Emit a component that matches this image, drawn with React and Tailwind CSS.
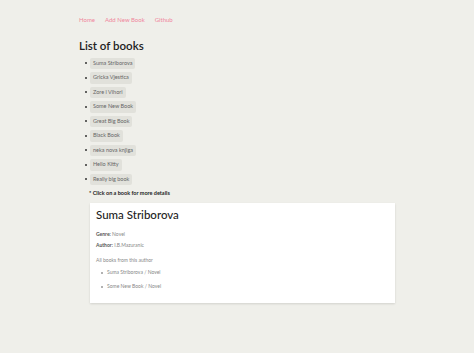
const books = [
  "Suma Striborova",
  "Gricka Vjestica",
  "Zore i Vihori",
  "Some New Book",
  "Great Big Book",
  "Black Book",
  "neka nova knjiga",
  "Hello Kitty",
  "Really big book",
];

const Dot = ({ color }) => (
  <span className={`inline-block w-[2px] h-[2px] rounded-full ${color}`} />
);

const App = () => {
  return (
    <div
      className="min-h-[353px] bg-[#efefea] text-[#333] pl-[79px] pr-[79px]"
      style={{ fontFamily: "Lato, 'Noto Sans', sans-serif" }}
    >
      <nav className="flex gap-[10px] pt-[15px] text-[6px] text-[#f0869c]">
        <a>Home</a>
        <a>Add New Book</a>
        <a>Github</a>
      </nav>

      <h1 className="mt-[15px] text-[11.5px] font-semibold text-[#222] leading-[13px]">
        List of books
      </h1>

      <ul className="mt-[4px] pl-[6px] text-[5.5px]">
        {books.map((b) => (
          <li key={b} className="h-[14.5px] flex items-center gap-[3px]">
            <Dot color="bg-[#333]" />
            <span className="bg-[#e1e1db] text-[#666] rounded-[2px] px-[3px] py-[3px] leading-none">
              {b}
            </span>
          </li>
        ))}
      </ul>

      <p className="mt-[2px] ml-[10px] text-[5.5px] font-bold text-[#222]">
        * Click on a book for more details
      </p>

      <div className="mt-[6px] ml-[11px] w-[305px] h-[100px] bg-white shadow-[0_1px_2px_rgba(0,0,0,0.12)] px-[6px] pt-[4px]">
        <h2 className="text-[11.5px] font-medium text-[#222] leading-[16px]">
          Suma Striborova
        </h2>
        <p className="mt-[8px] text-[5px] text-[#888]">
          <span className="font-bold text-[#555]">Genre:</span> Novel
        </p>
        <p className="mt-[4px] text-[5px] text-[#888]">
          <span className="font-bold text-[#555]">Author:</span> I.B.Mazuranic
        </p>
        <p className="mt-[7px] text-[5px] text-[#888]">All books from this author</p>
        <ul className="mt-[1px] pl-[5px] text-[5px] text-[#888]">
          <li className="h-[14.5px] flex items-center gap-[4px]">
            <Dot color="bg-[#999]" />
            Suma Striborova / Novel
          </li>
          <li className="h-[14.5px] flex items-center gap-[4px]">
            <Dot color="bg-[#999]" />
            Some New Book / Novel
          </li>
        </ul>
      </div>
    </div>
  );
};

export default App;
